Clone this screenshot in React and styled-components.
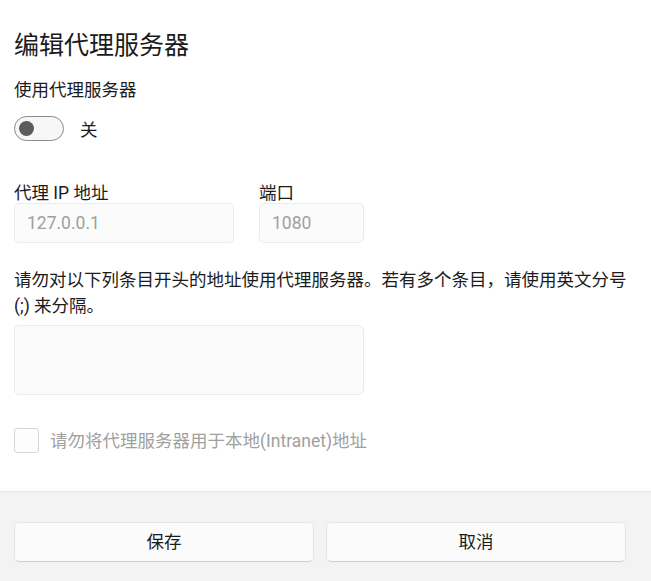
import React from "react";
import styled, { createGlobalStyle } from "styled-components";

const FONT = `Roboto, "Noto Sans CJK SC", sans-serif`;

const Global = createGlobalStyle`
  html, body { margin: 0; padding: 0; height: 100%; overflow: hidden; background: #ffffff; }
  body { font-family: ${FONT}; color: #1b1b1b; }
  #root { height: 100%; }
`;

const Dialog = styled.div`
  display: flex;
  flex-direction: column;
  width: 651px;
  height: 581px;
  overflow: hidden;
`;

const Content = styled.div`
  display: flex;
  flex-direction: column;
  padding: 30px 12px 38px 14px;
  background: #ffffff;
`;

const Title = styled.h1`
  margin: 0;
  font-family: ${FONT};
  font-size: 25px;
  font-weight: 400;
  line-height: 32px;
  color: #1b1b1b;
`;

const Label = styled.div`
  font-family: ${FONT};
  font-size: 17.5px;
  line-height: ${(p) => p.$lh || 24}px;
  margin-top: ${(p) => p.$mt || 0}px;
  color: ${(p) => (p.$muted ? "#a0a0a0" : "#1b1b1b")};
`;

const ToggleRow = styled.div`
  display: flex;
  align-items: center;
  gap: 16px;
  margin-top: 14px;
  height: 25px;
`;

const Switch = styled.div`
  box-sizing: border-box;
  width: 50px;
  height: 25px;
  border: 1px solid #8a8a8a;
  border-radius: 13px;
  background: #f7f7f7;
  display: flex;
  align-items: center;
  padding-left: 4px;
`;

const Knob = styled.div`
  width: 15px;
  height: 15px;
  border-radius: 50%;
  background: #5c5c5c;
`;

const StateText = styled.span`
  font-family: ${FONT};
  font-size: 17.5px;
  line-height: 24px;
  color: #1b1b1b;
  padding-top: 2px;
`;

const FieldRow = styled.div`
  display: flex;
  gap: 25px;
  margin-top: 42px;
`;

const Field = styled.div`
  display: flex;
  flex-direction: column;
  width: ${(p) => p.$w}px;
`;

const Input = styled.div`
  box-sizing: border-box;
  width: ${(p) => p.$w || "100%"};
  height: ${(p) => p.$h || 40}px;
  margin-top: ${(p) => p.$mt || 0}px;
  border: 1px solid #ebebeb;
  border-radius: 5px;
  background: #fbfbfb;
  padding: 0 12px;
  display: flex;
  align-items: ${(p) => (p.$multi ? "flex-start" : "center")};
  font-family: ${FONT};
  font-size: 17.5px;
  color: #a0a0a0;
`;

const Paragraph = styled.p`
  margin: 25px 0 0;
  font-family: ${FONT};
  font-size: 17.5px;
  line-height: 25.5px;
  color: #1b1b1b;
`;

const CheckRow = styled.div`
  display: flex;
  align-items: center;
  gap: 11px;
  margin-top: 33px;
  height: 25px;
`;

const CheckBox = styled.div`
  box-sizing: border-box;
  width: 25px;
  height: 25px;
  border: 1px solid #d6d6d6;
  border-radius: 3px;
  background: #fdfdfd;
`;

const Footer = styled.div`
  flex: 1;
  display: flex;
  gap: 12px;
  align-items: flex-start;
  border-top: 1px solid #e5e5e5;
  background: #f3f3f3;
  padding: 30px 25px 0 14px;
`;

const Button = styled.button`
  flex: 1;
  box-sizing: border-box;
  height: 40px;
  border: 1px solid #e5e5e5;
  border-bottom-color: #cccccc;
  border-radius: 5px;
  background: #fbfbfb;
  font-family: ${FONT};
  font-size: 17.5px;
  color: #1b1b1b;
  padding: 0 0 3px;
`;

export default function App() {
  return (
    <>
      <Global />
      <Dialog>
        <Content>
          <Title>编辑代理服务器</Title>
          <Label $mt={16}>使用代理服务器</Label>
          <ToggleRow>
            <Switch>
              <Knob />
            </Switch>
            <StateText>关</StateText>
          </ToggleRow>
          <FieldRow>
            <Field $w={220}>
              <Label $lh={20}>代理 IP 地址</Label>
              <Input>127.0.0.1</Input>
            </Field>
            <Field $w={105}>
              <Label $lh={20}>端口</Label>
              <Input>1080</Input>
            </Field>
          </FieldRow>
          <Paragraph>
            请勿对以下列条目开头的地址使用代理服务器。若有多个条目，请使用英文分号 (;) 来分隔。
          </Paragraph>
          <Input $w="350px" $h={70} $mt={6} $multi />
          <CheckRow>
            <CheckBox />
            <Label $muted>请勿将代理服务器用于本地(Intranet)地址</Label>
          </CheckRow>
        </Content>
        <Footer>
          <Button>保存</Button>
          <Button>取消</Button>
        </Footer>
      </Dialog>
    </>
  );
}
